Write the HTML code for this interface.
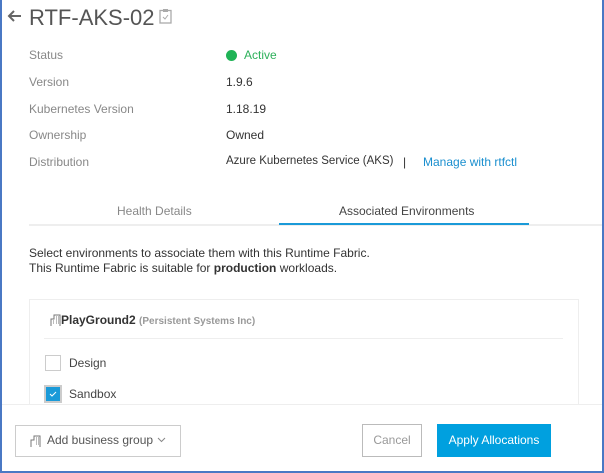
<!DOCTYPE html>
<html><head><style>
*{margin:0;padding:0;box-sizing:border-box}
body{width:604px;height:473px;background:#fff;font-family:"Liberation Sans",sans-serif;position:relative;overflow:hidden;color:#333}
.frame{position:absolute;left:0;top:-2px;width:604px;height:475px;border:2px solid #4a78c4;border-top:none}
.a{position:absolute;white-space:nowrap}
.lbl{font-size:12px;color:#888}
.val{font-size:12px;color:#333}
</style></head><body>
<div class="frame"></div>
<svg class="a" style="left:7px;top:9px" width="16" height="14" viewBox="0 0 16 14"><path d="M14 7H2M7 2L2 7l5 5" stroke="#666" stroke-width="2" fill="none"/></svg>
<div class="a" style="left:29px;top:5px;font-size:22px;color:#555">RTF-AKS-02</div>
<svg class="a" style="left:159px;top:8px" width="13" height="16" viewBox="0 0 13 16"><rect x="1" y="2.5" width="11" height="12.5" fill="none" stroke="#aaa" stroke-width="1.3"/><rect x="4" y="1" width="5" height="3" fill="#aaa"/><path d="M4 9l2 2 3-4" stroke="#aaa" fill="none"/></svg>
<div class="a lbl" style="left:29px;top:48px">Status</div>
<div class="a" style="left:226px;top:50px;width:11px;height:11px;border-radius:50%;background:#1fb356"></div>
<div class="a" style="left:244px;top:48px;font-size:12px;color:#2db05a">Active</div>
<div class="a lbl" style="left:29px;top:75px">Version</div><div class="a val" style="left:226px;top:75px">1.9.6</div>
<div class="a lbl" style="left:29px;top:102px">Kubernetes Version</div><div class="a val" style="left:226px;top:102px">1.18.19</div>
<div class="a lbl" style="left:29px;top:128px">Ownership</div><div class="a val" style="left:226px;top:128px">Owned</div>
<div class="a lbl" style="left:29px;top:155px">Distribution</div><div class="a val" style="left:226px;top:155px;font-size:11.5px">Azure Kubernetes Service (AKS)</div>
<div class="a val" style="left:403px;top:155px">|</div>
<div class="a" style="left:423px;top:155px;font-size:12px;color:#1a8fcf">Manage with rtfctl</div>
<div class="a" style="left:117px;top:204px;font-size:12px;color:#888">Health Details</div>
<div class="a" style="left:339px;top:204px;font-size:12px;color:#444">Associated Environments</div>
<div class="a" style="left:29px;top:224px;width:573px;height:2px;background:#eee"></div>
<div class="a" style="left:279px;top:223px;width:250px;height:2px;background:#1a9ad8"></div>
<div class="a" style="left:29px;top:246px;font-size:12px;line-height:15px;color:#333">Select environments to associate them with this Runtime Fabric.<br>This Runtime Fabric is suitable for <b>production</b> workloads.</div>
<div class="a" style="left:29px;top:299px;width:550px;height:120px;border:1px solid #eee"></div>
<svg class="a" style="left:50px;top:314px" width="11" height="12" viewBox="0 0 11 12"><path d="M1 12V5h3V1h6v11M3 7h1M3 9h1M6 3h1M8 3h1M6 5h1M8 5h1M6 7h1M8 7h1M6 9h1M8 9h1" stroke="#777" fill="none"/></svg>
<div class="a" style="left:61px;top:313px;font-size:12px;font-weight:bold;color:#333">PlayGround2 <span style="font-size:10px;color:#999">(Persistent Systems Inc)</span></div>
<div class="a" style="left:44px;top:338px;width:519px;height:1px;background:#eee"></div>
<div class="a" style="left:45px;top:355px;width:16px;height:16px;border:1px solid #ccc"></div>
<div class="a" style="left:69px;top:356px;font-size:12px;color:#444">Design</div>
<div class="a" style="left:44px;top:385px;width:18px;height:18px;border:2px solid #ccc;background:#1a9ad8"></div>
<svg class="a" style="left:48px;top:390px" width="10" height="8" viewBox="0 0 10 8"><path d="M2 4l2 2 4-4" stroke="#fff" fill="none"/></svg>
<div class="a" style="left:69px;top:387px;font-size:12px;color:#444">Sandbox</div>
<div class="a" style="left:2px;top:404px;width:600px;height:67px;background:#fff;border-top:1px solid #eee"></div>
<div class="a" style="left:15px;top:425px;width:166px;height:32px;border:1px solid #ccc"></div>
<svg class="a" style="left:30px;top:435px" width="11" height="12" viewBox="0 0 11 12"><path d="M1 12V5h3V1h6v11M6 3h1M8 3h1M6 5h1M8 5h1M6 7h1M8 7h1M6 9h1M8 9h1" stroke="#777" fill="none"/></svg>
<div class="a" style="left:47px;top:433px;font-size:12px;color:#555">Add business group</div>
<svg class="a" style="left:157px;top:437px" width="9" height="6" viewBox="0 0 9 6"><path d="M1 1l3.5 3.5L8 1" stroke="#888" fill="none"/></svg>
<div class="a" style="left:362px;top:424px;width:60px;height:33px;border:1px solid #bbb;font-size:12px;color:#999;text-align:center;line-height:31px">Cancel</div>
<div class="a" style="left:437px;top:424px;width:114px;height:33px;background:#00a0df;font-size:12px;color:#fff;text-align:center;line-height:33px">Apply Allocations</div>
</body></html>
